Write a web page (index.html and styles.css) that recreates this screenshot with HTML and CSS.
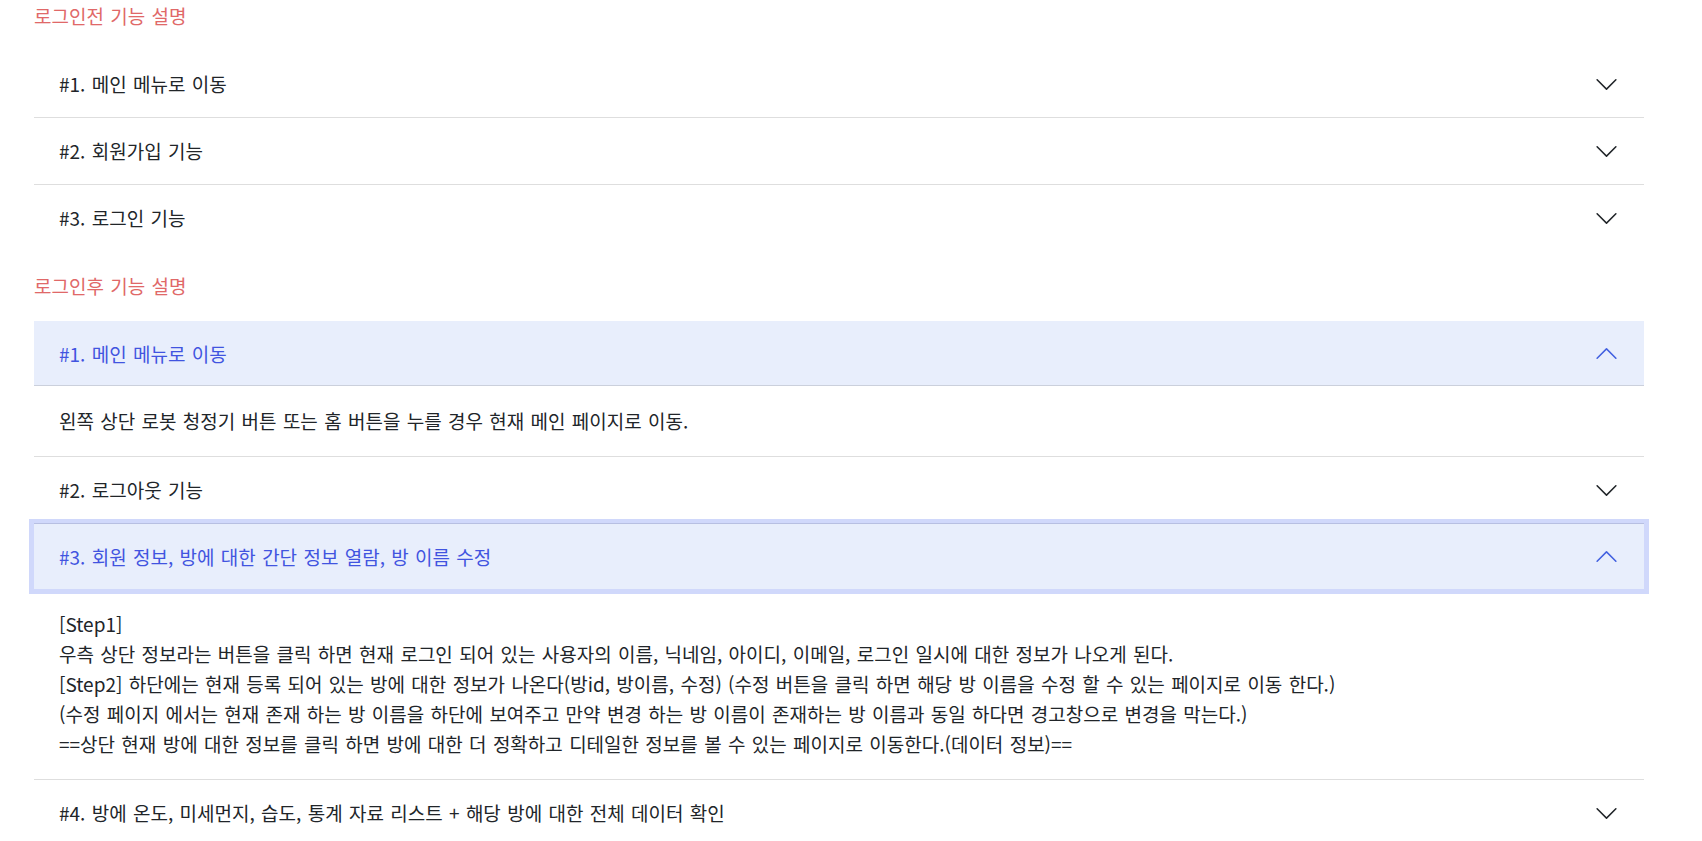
FILE: index.html
```html
<!DOCTYPE html>
<html lang="ko">
<head>
<meta charset="utf-8">
<title>기능 설명</title>
<link rel="stylesheet" href="styles.css">
</head>
<body>
<div class="page">
  <h2 class="section-title">로그인전 기능 설명</h2>
  <div class="accordion">
    <div class="acc-item">
      <button class="acc-btn"><span class="acc-label">#1. 메인 메뉴로 이동</span><svg class="chev" viewBox="0 0 16 16"><path fill="currentColor" fill-rule="evenodd" d="M1.646 4.646a.5.5 0 0 1 .708 0L8 10.293l5.646-5.647a.5.5 0 0 1 .708.708l-6 6a.5.5 0 0 1-.708 0l-6-6a.5.5 0 0 1 0-.708z"/></svg></button>
    </div>
    <div class="acc-item">
      <button class="acc-btn"><span class="acc-label">#2. 회원가입 기능</span><svg class="chev" viewBox="0 0 16 16"><path fill="currentColor" fill-rule="evenodd" d="M1.646 4.646a.5.5 0 0 1 .708 0L8 10.293l5.646-5.647a.5.5 0 0 1 .708.708l-6 6a.5.5 0 0 1-.708 0l-6-6a.5.5 0 0 1 0-.708z"/></svg></button>
    </div>
    <div class="acc-item">
      <button class="acc-btn"><span class="acc-label">#3. 로그인 기능</span><svg class="chev" viewBox="0 0 16 16"><path fill="currentColor" fill-rule="evenodd" d="M1.646 4.646a.5.5 0 0 1 .708 0L8 10.293l5.646-5.647a.5.5 0 0 1 .708.708l-6 6a.5.5 0 0 1-.708 0l-6-6a.5.5 0 0 1 0-.708z"/></svg></button>
    </div>
  </div>

  <h2 class="section-title">로그인후 기능 설명</h2>
  <div class="accordion">
    <div class="acc-item">
      <button class="acc-btn open"><span class="acc-label">#1. 메인 메뉴로 이동</span><svg class="chev" viewBox="0 0 16 16"><path fill="currentColor" fill-rule="evenodd" d="M1.646 4.646a.5.5 0 0 1 .708 0L8 10.293l5.646-5.647a.5.5 0 0 1 .708.708l-6 6a.5.5 0 0 1-.708 0l-6-6a.5.5 0 0 1 0-.708z"/></svg></button>
      <div class="acc-body">왼쪽 상단 로봇 청정기 버튼 또는 홈 버튼을 누를 경우 현재 메인 페이지로 이동.</div>
    </div>
    <div class="acc-item">
      <button class="acc-btn"><span class="acc-label">#2. 로그아웃 기능</span><svg class="chev" viewBox="0 0 16 16"><path fill="currentColor" fill-rule="evenodd" d="M1.646 4.646a.5.5 0 0 1 .708 0L8 10.293l5.646-5.647a.5.5 0 0 1 .708.708l-6 6a.5.5 0 0 1-.708 0l-6-6a.5.5 0 0 1 0-.708z"/></svg></button>
    </div>
    <div class="acc-item">
      <button class="acc-btn open focused"><span class="acc-label">#3. 회원 정보, 방에 대한 간단 정보 열람, 방 이름 수정</span><svg class="chev" viewBox="0 0 16 16"><path fill="currentColor" fill-rule="evenodd" d="M1.646 4.646a.5.5 0 0 1 .708 0L8 10.293l5.646-5.647a.5.5 0 0 1 .708.708l-6 6a.5.5 0 0 1-.708 0l-6-6a.5.5 0 0 1 0-.708z"/></svg></button>
      <div class="acc-body">[Step1]<br>우측 상단 정보라는 버튼을 클릭 하면 현재 로그인 되어 있는 사용자의 이름, 닉네임, 아이디, 이메일, 로그인 일시에 대한 정보가 나오게 된다.<br>[Step2] 하단에는 현재 등록 되어 있는 방에 대한 정보가 나온다(방id, 방이름, 수정) (수정 버튼을 클릭 하면 해당 방 이름을 수정 할 수 있는 페이지로 이동 한다.)<br>(수정 페이지 에서는 현재 존재 하는 방 이름을 하단에 보여주고 만약 변경 하는 방 이름이 존재하는 방 이름과 동일 하다면 경고창으로 변경을 막는다.)<br>==상단 현재 방에 대한 정보를 클릭 하면 방에 대한 더 정확하고 디테일한 정보를 볼 수 있는 페이지로 이동한다.(데이터 정보)==</div>
    </div>
    <div class="acc-item">
      <button class="acc-btn"><span class="acc-label">#4. 방에 온도, 미세먼지, 습도, 통계 자료 리스트 + 해당 방에 대한 전체 데이터 확인</span><svg class="chev" viewBox="0 0 16 16"><path fill="currentColor" fill-rule="evenodd" d="M1.646 4.646a.5.5 0 0 1 .708 0L8 10.293l5.646-5.647a.5.5 0 0 1 .708.708l-6 6a.5.5 0 0 1-.708 0l-6-6a.5.5 0 0 1 0-.708z"/></svg></button>
    </div>
  </div>
</div>
</body>
</html>
```

FILE: styles.css
```css
html, body {
  margin: 0;
  padding: 0;
  background: #ffffff;
}

body {
  font-family: "Noto Sans CJK KR", "Noto Sans", sans-serif;
  font-size: 19px;
  line-height: 30px;
  word-spacing: 1px;
  color: #212529;
}

.page {
  width: 1610px;
  margin-left: 34px;
  padding-top: 1px;
}

.section-title {
  margin: 0 0 20px 0;
  font-size: 19px;
  font-weight: 400;
  line-height: 30px;
  color: #e06868;
}

.accordion {
  margin-bottom: 20px;
}

.acc-item {
  border-bottom: 1px solid #dedede;
}

.accordion .acc-item:last-child {
  border-bottom: 0;
}

.acc-btn {
  position: relative;
  display: flex;
  align-items: center;
  width: 100%;
  height: 66px;
  padding: 0 25px;
  margin: 0;
  border: 0;
  background: #ffffff;
  font: inherit;
  word-spacing: inherit;
  color: #212529;
  text-align: left;
  cursor: pointer;
}

.acc-label {
  flex: 1;
}

.chev {
  width: 25px;
  height: 25px;
  flex-shrink: 0;
  color: #212529;
}

.acc-btn.open {
  height: 65px;
  background: #e8eefc;
  color: #4154e0;
  box-shadow: inset 0 -1px 0 rgba(0, 0, 0, 0.125);
}

.acc-btn.open .chev {
  color: #4260e0;
  transform: rotate(180deg);
}

.acc-btn.focused {
  z-index: 3;
  box-shadow: 0 0 0 5px rgba(66, 100, 241, 0.25);
}

.acc-body {
  padding: 20px 25px;
  color: #212529;
}
```
